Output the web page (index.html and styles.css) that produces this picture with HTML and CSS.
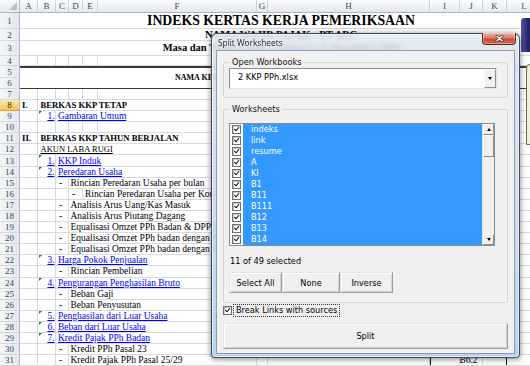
FILE: index.html
```html
<!DOCTYPE html>
<html>
<head>
<meta charset="utf-8">
<title>Split Worksheets</title>
<link rel="stylesheet" href="styles.css">
</head>
<body>
<div class="app">
  <div class="sheet">
    <div class="colhdr">
      <div class="corner"><span class="ctri"></span></div>
      <div>A</div><div>B</div><div>C</div><div>D</div><div>E</div><div>F</div>
      <div>G</div><div>H</div><div>I</div><div>J</div><div>K</div><div>L</div>
    </div>
    <div class="body">
      <div class="rh">1</div>
      <div class="c"><span class="x all ctr title">INDEKS KERTAS KERJA PEMERIKSAAN</span></div>
      <div class="rh">2</div>
      <div class="c"><span class="x all ctr sub">NAMA WAJIB PAJAK : PT ABC</span></div>
      <div class="rh">3</div>
      <div class="c"><span class="x all ctr sub2">Masa dan Tahun Pajak : Januari s.d. Desember 2009</span></div>
      <div class="rh">4</div>
      <div class="c g"></div>
      <div class="rh">5</div>
      <div class="c hd"><span class="x k6 hdtext">NAMA KERTAS KERJA</span></div>
      <div class="rh">6</div>
      <div class="rh">7</div>
      <div class="c g"></div>

      <div class="rh sel">8</div>
      <div class="c g"><span class="x k1 h">I.</span><span class="x k2 h">BERKAS KKP TETAP</span></div>
      <div class="rh">9</div>
      <div class="c g"><span class="tri"></span><span class="x nb lk">1.</span><span class="x k3 lk">Gambaran Umum</span></div>
      <div class="rh">10</div>
      <div class="c g"></div>
      <div class="rh">11</div>
      <div class="c g"><span class="x k1 h">II.</span><span class="x k2 h">BERKAS KKP TAHUN BERJALAN</span></div>
      <div class="rh">12</div>
      <div class="c g"><span class="x k2 ul">AKUN LABA RUGI</span></div>
      <div class="rh">13</div>
      <div class="c g"><span class="tri"></span><span class="x nb lk">1.</span><span class="x k3 lk">KKP Induk</span></div>
      <div class="rh">14</div>
      <div class="c g"><span class="tri"></span><span class="x nb lk">2.</span><span class="x k3 lk">Peredaran Usaha</span></div>
      <div class="rh">15</div>
      <div class="c g"><span class="x d3">-</span><span class="x k4">Rincian Peredaran Usaha per bulan</span></div>
      <div class="rh">16</div>
      <div class="c g"><span class="x d4">-</span><span class="x k5">Rincian Peredaran Usaha per Konsumen</span></div>
      <div class="rh">17</div>
      <div class="c g"><span class="x d3">-</span><span class="x k4">Analisis Arus Uang/Kas Masuk</span></div>
      <div class="rh">18</div>
      <div class="c g"><span class="x d3">-</span><span class="x k4">Analisis Arus Piutang Dagang</span></div>
      <div class="rh">19</div>
      <div class="c g"><span class="x d3">-</span><span class="x k4">Equalisasi Omzet PPh Badan &amp; DPP PPN</span></div>
      <div class="rh">20</div>
      <div class="c g"><span class="x d3">-</span><span class="x k4">Equalisasi Omzet PPh badan dengan Biaya</span></div>
      <div class="rh">21</div>
      <div class="c g"><span class="x d3">-</span><span class="x k4">Equalisasi Omzet PPh badan dengan PPh 23</span></div>
      <div class="rh">22</div>
      <div class="c g"><span class="tri"></span><span class="x nb lk">3.</span><span class="x k3 lk">Harga Pokok Penjualan</span></div>
      <div class="rh">23</div>
      <div class="c g"><span class="x d3">-</span><span class="x k4">Rincian Pembelian</span></div>
      <div class="rh">24</div>
      <div class="c g"><span class="tri"></span><span class="x nb lk">4.</span><span class="x k3 lk">Pengurangan Penghasilan Bruto</span></div>
      <div class="rh">25</div>
      <div class="c g"><span class="x d3">-</span><span class="x k4">Beban Gaji</span></div>
      <div class="rh">26</div>
      <div class="c g"><span class="x d3">-</span><span class="x k4">Beban Penyusutan</span></div>
      <div class="rh">27</div>
      <div class="c g"><span class="tri"></span><span class="x nb lk">5.</span><span class="x k3 lk">Penghasilan dari Luar Usaha</span></div>
      <div class="rh">28</div>
      <div class="c g"><span class="tri"></span><span class="x nb lk">6.</span><span class="x k3 lk">Beban dari Luar Usaha</span></div>
      <div class="rh">29</div>
      <div class="c g"><span class="tri"></span><span class="x nb lk">7.</span><span class="x k3 lk">Kredit Pajak PPh Badan</span></div>
      <div class="rh">30</div>
      <div class="c g"><span class="x d3">-</span><span class="x k4">Kredit PPh Pasal 23</span><span class="x box"></span></div>
      <div class="rh">31</div>
      <div class="c g"><span class="x d3">-</span><span class="x k4">Kredit Pajak PPh Pasal 25/29</span><span class="x box">B6.2</span></div>
    </div>
  </div>

  <div class="shape navy"></div>
  <div class="shape note"></div>

  <div class="dlg">
    <div class="tbar">
      <span class="ttl">Split Worksheets</span>
      <div class="close">
        <svg width="9" height="7" viewBox="0 0 9 7"><path d="M2 1.2 L7 5.8 M7 1.2 L2 5.8" stroke="#4a1f17" stroke-width="2.8" stroke-linecap="round"/><path d="M2 1.2 L7 5.8 M7 1.2 L2 5.8" stroke="#fff" stroke-width="1.5" stroke-linecap="round"/></svg>
      </div>
    </div>
    <div class="client">
      <fieldset class="grp g1">
        <legend>Open Workbooks</legend>
        <div class="combo">
          <span class="ctext">2 KKP PPh.xlsx</span>
          <div class="ddbtn"><i class="arr down"></i></div>
        </div>
      </fieldset>
      <fieldset class="grp g2">
        <legend>Worksheets</legend>
        <div class="list">
          <div class="items">
            <div class="it"><span class="chkcell"><span class="chk on"></span></span><span class="lbl">indeks</span></div>
            <div class="it"><span class="chkcell"><span class="chk on"></span></span><span class="lbl">link</span></div>
            <div class="it"><span class="chkcell"><span class="chk on"></span></span><span class="lbl">resume</span></div>
            <div class="it"><span class="chkcell"><span class="chk on"></span></span><span class="lbl">A</span></div>
            <div class="it"><span class="chkcell"><span class="chk on"></span></span><span class="lbl">KI</span></div>
            <div class="it"><span class="chkcell"><span class="chk on"></span></span><span class="lbl">B1</span></div>
            <div class="it"><span class="chkcell"><span class="chk on"></span></span><span class="lbl">B11</span></div>
            <div class="it"><span class="chkcell"><span class="chk on"></span></span><span class="lbl">B111</span></div>
            <div class="it"><span class="chkcell"><span class="chk on"></span></span><span class="lbl">B12</span></div>
            <div class="it"><span class="chkcell"><span class="chk on"></span></span><span class="lbl">B13</span></div>
            <div class="it"><span class="chkcell"><span class="chk on"></span></span><span class="lbl">B14</span></div>
          </div>
          <div class="sb">
            <div class="sbtn"><i class="arr up"></i></div>
            <div class="thumb"></div>
            <div class="track"></div>
            <div class="sbtn"><i class="arr down"></i></div>
          </div>
        </div>
        <div class="count">11 of 49 selected</div>
        <div class="btns">
          <button class="btn w1">Select All</button>
          <button class="btn w2">None</button>
          <button class="btn w1">Inverse</button>
        </div>
      </fieldset>
      <div class="chkrow"><span class="chk on"></span><span class="focus">Break Links with sources</span></div>
      <button class="btn split">Split</button>
    </div>
  </div>
</div>
</body>
</html>
```
FILE: styles.css
```css
* { box-sizing: border-box; }
html, body { margin: 0; padding: 0; background: #fff; }

.app {
  position: relative;
  width: 530px;
  height: 366px;
  overflow: hidden;
  font-family: "Liberation Serif", serif;
  color: #000;
  --gl: #d5dae2;
  --cols: 18px 18px 13px 14px 15px 159px 11px 162px 30px 23px 24px 35px;
}

.sheet { width: 542px; }

/* column header */
.colhdr {
  display: grid;
  grid-template-columns: 20px var(--cols);
  height: 13px;
  background: linear-gradient(#fbfcfd, #e4e8ee);
  border-bottom: 1px solid #aeb6c2;
}
.colhdr > div {
  border-right: 1px solid #cdd3dc;
  display: flex;
  align-items: center;
  justify-content: center;
  font-size: 9px;
  line-height: 12px;
  color: #3b4a5e;
}
.colhdr > .corner {
  justify-content: flex-end;
  align-items: flex-end;
  padding: 0 2px 2px 0;
  border-right-color: #aeb6c2;
}
.ctri {
  width: 8px;
  height: 8px;
  background: #b9c1cc;
  clip-path: polygon(100% 0, 100% 100%, 0 100%);
}

/* body grid */
.body {
  display: grid;
  grid-template-columns: 20px 522px;
  grid-template-rows: 16px 12px 15px 10px 12px 11px 11px repeat(24, 11.1px);
}
.rh {
  grid-column: 1;
  background: linear-gradient(90deg, #f4f6f9, #e4e8ee);
  border-right: 1px solid #aeb6c2;
  border-bottom: 1px solid #d2d7de;
  display: flex;
  align-items: center;
  justify-content: center;
  font-size: 9px;
  line-height: 10px;
  color: #33445a;
}
.rh.sel {
  background: linear-gradient(#fce6ad, #f6c25a);
  border-bottom-color: #e0a338;
  color: #222;
}
.c {
  grid-column: 2;
  display: grid;
  grid-template-columns: var(--cols);
  grid-template-rows: 1fr;
  border-bottom: 1px solid var(--gl);
  white-space: nowrap;
  min-height: 0;
}
.g {
  background:
    linear-gradient(var(--gl), var(--gl)) 17px 0 / 1px 100% no-repeat,
    linear-gradient(var(--gl), var(--gl)) 35px 0 / 1px 100% no-repeat,
    linear-gradient(var(--gl), var(--gl)) 48px 0 / 1px 100% no-repeat,
    linear-gradient(var(--gl), var(--gl)) 62px 0 / 1px 100% no-repeat,
    linear-gradient(var(--gl), var(--gl)) 77px 0 / 1px 100% no-repeat,
    linear-gradient(var(--gl), var(--gl)) 236px 0 / 1px 100% no-repeat,
    linear-gradient(var(--gl), var(--gl)) 247px 0 / 1px 100% no-repeat,
    linear-gradient(var(--gl), var(--gl)) 409px 0 / 1px 100% no-repeat,
    linear-gradient(var(--gl), var(--gl)) 439px 0 / 1px 100% no-repeat,
    linear-gradient(var(--gl), var(--gl)) 462px 0 / 1px 100% no-repeat,
    linear-gradient(var(--gl), var(--gl)) 486px 0 / 1px 100% no-repeat;
}
.hd {
  grid-row: span 2;
  border-top: 2px solid #3c3c3c;
  border-bottom: 1px solid #3c3c3c;
}

/* cell text */
.x {
  grid-row: 1;
  align-self: stretch;
  justify-self: start;
  display: flex;
  align-items: center;
  background: #fff;
  padding-left: 2px;
  font-size: 9.5px;
  line-height: 10px;
}
.all { grid-column: 1 / -1; }
.k1 { grid-column: 1 / -1; }
.k2 { grid-column: 2 / -1; padding-left: 2.5px; }
.k3 { grid-column: 3 / -1; }
.k4 { grid-column: 4 / -1; padding-left: 1.5px; }
.k5 { grid-column: 5 / -1; }
.k6 { grid-column: 6 / -1; }
.ctr { justify-self: center; padding-left: 0; }
.title { font-size: 13.8px; font-weight: bold; line-height: 14px; }
.sub { font-size: 10.6px; font-weight: bold; }
.sub2 { font-size: 10.5px; font-weight: bold; }
.hdtext { font-size: 8px; font-weight: bold; padding-left: 77px; background: transparent; }
.h { font-size: 8.7px; font-weight: bold; }
.ul { font-size: 8.5px; text-decoration: underline; }
.lk { color: #0000ff; text-decoration: underline; }
.nb { grid-column: 2; justify-self: end; padding-left: 0; padding-right: 1.5px; background: transparent; }
.d3 { grid-column: 3; padding-left: 3px; background: transparent; }
.d4 { grid-column: 4; padding-left: 3px; background: transparent; }
.tri {
  grid-column: 2;
  grid-row: 1;
  justify-self: start;
  align-self: start;
  width: 0;
  height: 0;
  margin-left: 1px;
  border-top: 3px solid #138a13;
  border-right: 3px solid transparent;
}
.box {
  grid-column: 9 / 12;
  justify-self: stretch;
  justify-content: center;
  padding-left: 0;
  border-left: 1px solid #111;
  border-right: 1px solid #111;
  background: transparent;
}

/* free shapes on the sheet canvas */
.shape { position: absolute; }
.navy {
  left: 521px;
  top: 18px;
  width: 20px;
  height: 34px;
  border-radius: 3px 0 0 0;
  background: linear-gradient(90deg, #5656a6, #25256c 35%, #1f1f5e);
}
.note {
  left: 526px;
  top: 64px;
  width: 20px;
  height: 81px;
  border: 1px solid #6c6a52;
  border-radius: 4px 0 0 0;
  background: #f1efd8;
}

/* dialog window */
.dlg {
  position: absolute;
  left: 211px;
  top: 33px;
  width: 309px;
  height: 325px;
  display: flex;
  flex-direction: column;
  padding: 0 4px 3px 4px;
  border: 1px solid rgba(28, 38, 56, 0.8);
  border-radius: 6px 6px 4px 4px;
  background: linear-gradient(180deg, rgba(228, 234, 241, 0.84) 0px, rgba(216, 227, 239, 0.88) 18px, rgba(198, 218, 240, 0.9) 55%, rgba(176, 210, 244, 0.93) 100%);
  backdrop-filter: blur(2.4px);
  box-shadow: 0 1px 6px rgba(0, 0, 0, 0.5), inset 0 0 0 1px rgba(255, 255, 255, 0.55);
  font-family: "DejaVu Sans", sans-serif;
  font-size: 8.2px;
  color: #000;
}
.tbar {
  height: 16px;
  flex: none;
  display: flex;
  align-items: flex-start;
}
.ttl {
  padding: 4px 0 0 2px;
  font-family: "Open Sans", sans-serif;
  font-size: 8.3px;
  line-height: 10px;
  color: #1a1a1a;
  text-shadow: 0 0 3px rgba(255, 255, 255, 0.9);
}
.close {
  margin: -1px -1px 0 auto;
  width: 34px;
  height: 12px;
  display: flex;
  align-items: center;
  justify-content: center;
  border: 1px solid #5b2419;
  border-top: none;
  border-radius: 0 0 4px 4px;
  background: linear-gradient(#eab1a2 0%, #dc7d66 45%, #c64a31 55%, #d66a4d 100%);
  box-shadow: inset 0 0 0 1px rgba(255, 255, 255, 0.35);
}
.close svg { display: block; }

.client {
  flex: 1;
  display: flex;
  flex-direction: column;
  padding-top: 6px;
  background: #f0f0f0;
  border: 1px solid #8e9cad;
}

.grp {
  margin: 0 6px;
  min-width: 0;
  border: 1px solid #cfd4d9;
  border-radius: 2px;
}
.grp legend {
  padding: 0 2px;
  margin-left: 1px;
  font-size: 8.2px;
  line-height: 10px;
  color: #111;
}
.g1 { padding: 1px 10px 8px 5px; }
.g2 { padding: 9px 12px 9px 5px; margin-top: 6px; }

.combo {
  height: 21px;
  display: flex;
  background: #fff;
  border: 1px solid;
  border-color: #8a8a8a #e2e2e2 #e2e2e2 #8a8a8a;
}
.ctext {
  flex: 1;
  padding: 3px 0 0 8px;
  line-height: 10px;
}
.ddbtn {
  width: 12px;
  display: flex;
  align-items: center;
  justify-content: center;
  background: #f0f0f0;
  border: 1px solid;
  border-color: #fdfdfd #8f8f8f #8f8f8f #fdfdfd;
}

.arr {
  display: block;
  width: 0;
  height: 0;
  border-left: 2.5px solid transparent;
  border-right: 2.5px solid transparent;
}
.arr.down { border-top: 3px solid #000; }
.arr.up { border-bottom: 3px solid #000; }

.list {
  height: 123px;
  display: flex;
  border: 1px solid #858b93;
  background: #fff;
}
.items { flex: 1; display: flex; flex-direction: column; }
.it { height: 11px; display: flex; }
.chkcell {
  width: 13px;
  display: flex;
  align-items: center;
  padding-left: 2px;
  background: #fff;
}
.lbl {
  flex: 1;
  background: #3399ff;
  color: #fff;
  padding-left: 8px;
  line-height: 11px;
}
.chk {
  position: relative;
  flex: none;
  width: 9px;
  height: 9px;
  border: 1px solid #6f6f6f;
  background: #fff;
  box-shadow: inset 1px 1px 0 #c9c9c9;
}
.chk.on::after {
  content: "";
  position: absolute;
  left: 2.2px;
  top: 0.1px;
  width: 2.2px;
  height: 4.4px;
  border: solid #000;
  border-width: 0 1.8px 1.8px 0;
  transform: rotate(40deg);
}

.sb {
  width: 12px;
  display: flex;
  flex-direction: column;
  background: #f3f3f3;
  border-left: 1px solid #e6e6e6;
}
.sbtn, .thumb {
  display: flex;
  align-items: center;
  justify-content: center;
  background: #f0f0f0;
  border: 1px solid;
  border-color: #fdfdfd #8f8f8f #8f8f8f #fdfdfd;
}
.sbtn { height: 11px; }
.thumb { height: 22px; }
.track {
  flex: 1;
  background: repeating-conic-gradient(#f7f7f7 0 25%, #ebebeb 0 50%) 0 0 / 2px 2px;
}

.count {
  margin-top: 10px;
  padding-left: 1px;
  line-height: 11px;
}
.btns { display: flex; margin-top: 5px; }

.btn {
  appearance: none;
  margin: 0;
  padding: 0;
  height: 21px;
  font: inherit;
  color: #000;
  background: #f0f0f0;
  border: 1px solid;
  border-color: #e4e4e4 #9c9c9c #9c9c9c #e4e4e4;
  box-shadow: inset 1px 1px 0 #fff, inset -1px -1px 0 #d2d2d2;
}
.w1 { width: 53px; }
.w2 { width: 58px; }

.chkrow {
  height: 13px;
  margin: 1px 0 0 6px;
  display: flex;
  align-items: center;
  gap: 1px;
}
.focus {
  border: 1px dotted #333;
  padding: 0 2px;
  line-height: 11px;
}
.split {
  height: 26px;
  margin: 6px 6px 0 6px;
}
```
